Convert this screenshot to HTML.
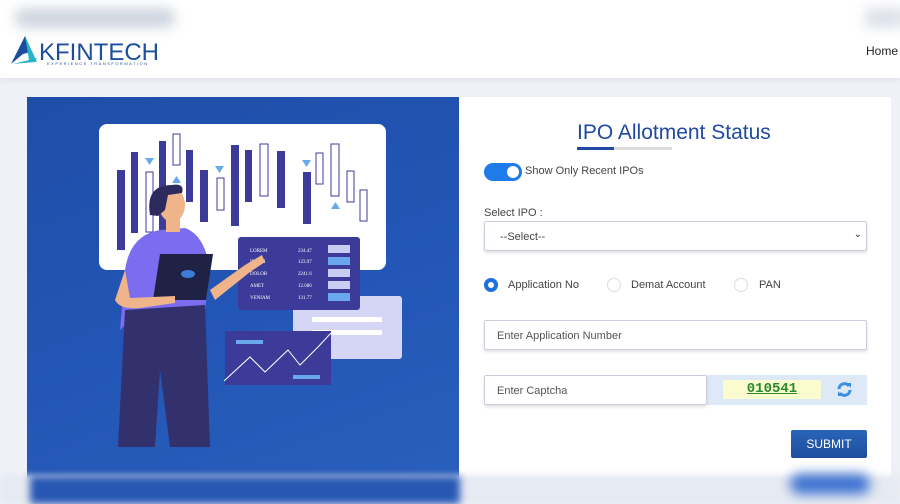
<!DOCTYPE html>
<html><head><meta charset="utf-8"><style>
*{margin:0;padding:0;box-sizing:border-box}
body{width:900px;height:504px;overflow:hidden;background:#eef1f7;font-family:"Liberation Sans",sans-serif;position:relative}
.hdr{position:absolute;left:0;top:0;width:900px;height:78px;background:#fff;box-shadow:0 2px 6px rgba(0,0,0,.06)}
.blur1{position:absolute;left:15px;top:8px;width:160px;height:20px;background:#cfd6e0;filter:blur(6px);border-radius:8px}
.blur2{position:absolute;left:865px;top:8px;width:40px;height:20px;background:#dde2ea;filter:blur(6px)}
.logo{position:absolute;left:11px;top:32px}
.home{position:absolute;right:2px;top:44px;font-size:12px;color:#222}
.left{position:absolute;left:27px;top:97px;width:432px;height:385px;background:linear-gradient(160deg,#1f4ea8 0%,#2255b5 50%,#2a5fbd 100%)}
.right{position:absolute;left:459px;top:97px;width:432px;height:385px;background:#fff}
.title{position:absolute;left:577px;top:121px;font-size:21px;color:#1f4aa0}
.ul1{position:absolute;left:577px;top:147px;width:37px;height:3px;background:#1f4aa0}
.ul2{position:absolute;left:614px;top:147px;width:58px;height:3px;background:#ddd}
.tog{position:absolute;left:484px;top:163px;width:38px;height:18px;border-radius:9px;background:#1e7be8}
.tog:after{content:"";position:absolute;right:3px;top:3px;width:12px;height:12px;border-radius:50%;background:#fff}
.t{position:absolute;font-size:11px;color:#444}
.box{position:absolute;background:#fff;border:1px solid #ccd;box-shadow:0 2px 3px rgba(0,0,0,.12);border-radius:2px}
.radio{position:absolute;width:14px;height:14px;border-radius:50%;border:1px solid #ddd}
.radio.on{border:4px solid #1e6fe0}
.cap{position:absolute;left:707px;top:375px;width:160px;height:30px;background:#dde9f7}
.capt{position:absolute;left:723px;top:380px;width:98px;height:19px;background:#fbfbd0;font-family:"Liberation Mono",monospace;font-weight:bold;color:#2a8a2a;font-size:14px;text-align:center;line-height:19px;text-decoration:underline}
.btn{position:absolute;left:791px;top:430px;width:76px;height:28px;background:linear-gradient(#2a64b8,#1d4e9e);color:#fff;font-size:12px;text-align:center;line-height:28px;border-radius:2px}
.bot{position:absolute;left:0;top:475px;width:900px;height:29px;background:#e6eaf2;filter:blur(3px)}
.botl{position:absolute;left:30px;top:476px;width:430px;height:28px;background:#2757b3;filter:blur(4px)}
.botr{position:absolute;left:790px;top:474px;width:80px;height:20px;background:#3a6fd0;filter:blur(6px);border-radius:10px}
</style></head><body>
<div class="hdr"></div>
<div class="blur1"></div><div class="blur2"></div>
<svg class="logo" width="155" height="34" viewBox="0 0 155 34">
<path d="M0 32 L14 4 L20 20 L12 22 Z" fill="#1d4e9e"/><path d="M14 4 L26 30 L18 28 Z" fill="#27b4c9"/><path d="M2 32 L26 26 L24 30 Z" fill="#27b4c9"/>
<text x="28" y="28" font-family="Liberation Sans" font-size="24" fill="#1d4e9e">KFINTECH</text>
<text x="36" y="33" font-family="Liberation Sans" font-size="4" fill="#1d4e9e" letter-spacing="1.5">EXPERIENCE TRANSFORMATION</text>
</svg>
<div class="home">Home</div>
<div class="left">
<svg width="432" height="385" viewBox="27 97 432 385">
<rect x="99" y="124" width="287" height="146" rx="8" fill="#fff"/>
<g fill="#3c3b9a"><rect x="117" y="170" width="8" height="80"/><rect x="131" y="152" width="7" height="81"/><rect x="159" y="141" width="7" height="100"/><rect x="186" y="150" width="7" height="52"/><rect x="200" y="170" width="8" height="52"/><rect x="231" y="145" width="8" height="81"/><rect x="245" y="150" width="7" height="52"/><rect x="277" y="151" width="8" height="57"/><rect x="303" y="172" width="8" height="52"/></g>
<g fill="none" stroke="#3c3b9a" stroke-width="1"><rect x="173" y="134" width="7" height="31"/><rect x="146" y="172" width="7" height="60"/><rect x="217" y="178" width="7" height="32"/><rect x="260" y="144" width="8" height="52"/><rect x="316" y="153" width="7" height="31"/><rect x="331" y="144" width="8" height="52"/><rect x="347" y="171" width="7" height="31"/><rect x="360" y="190" width="7" height="31"/></g>
<g fill="#6aa8ee"><path d="M145 158h9l-4.5 7z"/><path d="M172 183h9l-4.5-7z"/><path d="M215 166h9l-4.5 7z"/><path d="M302 160h9l-4.5 7z"/><path d="M331 209h9l-4.5-7z"/></g>
<rect x="293" y="296" width="109" height="63" rx="3" fill="#d5d6f6"/>
<g fill="#fff"><rect x="312" y="317" width="70" height="5"/><rect x="312" y="330" width="70" height="5"/></g>
<rect x="238" y="237" width="122" height="73" rx="3" fill="#3c3b9a"/>
<g font-family="Liberation Serif" font-size="5" fill="#fff"><text x="250" y="252">LOREM</text><text x="250" y="263">IPSUM</text><text x="250" y="275">DOLOR</text><text x="250" y="287">AMET</text><text x="250" y="299">VENIAM</text>
<text x="298" y="252">234.47</text><text x="298" y="263">123.97</text><text x="298" y="275">2241.6</text><text x="298" y="287">12.086</text><text x="298" y="299">131.77</text></g>
<g fill="#c9cdf4"><rect x="328" y="245" width="22" height="8"/><rect x="328" y="269" width="22" height="8"/><rect x="328" y="281" width="22" height="8"/></g>
<g fill="#6aa8ee"><rect x="328" y="257" width="22" height="8"/><rect x="328" y="293" width="22" height="8"/></g>
<rect x="225" y="331" width="106" height="54" fill="#3c3b9a"/>
<rect x="236" y="340" width="27" height="4" fill="#6aa8ee"/><rect x="293" y="375" width="27" height="4" fill="#6aa8ee"/>
<polyline points="224,381 250,357 265,372 288,350 300,365 318,347 331,333" fill="none" stroke="#fff" stroke-width="1"/>
<path d="M120 330 L125 270 Q130 235 160 230 L185 228 Q205 235 210 270 L205 310 L140 310 Z" fill="#7b6cf0"/>
<path d="M125 310 L205 305 L210 447 L170 447 L160 370 L155 447 L118 447 Z" fill="#33306e"/>
<path d="M166 206 L180 206 L180 232 L166 232 Z" fill="#f0b48a"/>
<ellipse cx="172" cy="205" rx="13" ry="17" fill="#f0b48a"/>
<path d="M150 215 Q145 185 172 185 Q185 183 182 193 L168 195 L165 210 L158 216 Z" fill="#2d2b5e"/>
<path d="M210 290 L245 265 L262 255 L265 262 L250 272 L215 300 Z" fill="#f0b48a"/>
<path d="M160 254 L213 254 L206 300 L153 300 Z" fill="#1f2244"/>
<ellipse cx="188" cy="274" rx="7" ry="4" fill="#3b7cd8"/>
<path d="M115 300 Q120 310 140 308 L175 303 L175 296 L130 298 L125 270 Z" fill="#f0b48a"/>
</svg>
</div>
<div class="right"></div>
<div class="title">IPO Allotment Status</div>
<div class="ul1"></div><div class="ul2"></div>
<div class="tog"></div>
<div class="t" style="left:525px;top:165px">Show Only Recent IPOs</div>
<div class="t" style="left:484px;top:207px">Select IPO :</div>
<div class="box" style="left:484px;top:221px;width:383px;height:30px"><span class="t" style="left:15px;top:9px">--Select--</span><span class="t" style="right:4px;top:7px;font-size:10px;color:#333">&#8964;</span></div>
<div class="radio on" style="left:484px;top:278px"></div><div class="t" style="left:508px;top:279px">Application No</div>
<div class="radio" style="left:607px;top:278px"></div><div class="t" style="left:631px;top:279px">Demat Account</div>
<div class="radio" style="left:734px;top:278px"></div><div class="t" style="left:759px;top:279px">PAN</div>
<div class="box" style="left:484px;top:320px;width:383px;height:30px"><span class="t" style="left:12px;top:9px;color:#555">Enter Application Number</span></div>
<div class="cap"></div>
<div class="box" style="left:484px;top:375px;width:223px;height:30px"><span class="t" style="left:12px;top:9px;color:#555">Enter Captcha</span></div>
<div class="capt">010541</div>
<svg style="position:absolute;left:836px;top:381px" width="17" height="17" viewBox="0 0 17 17"><path d="M3 8a5.5 5.5 0 0 1 10-3" fill="none" stroke="#3b8fe0" stroke-width="3"/><path d="M14 9a5.5 5.5 0 0 1-10 3" fill="none" stroke="#3b8fe0" stroke-width="3"/><path d="M11 2l4 0 0 5z M6 15l-4 0 0-5z" fill="#3b8fe0"/></svg>
<div class="btn">SUBMIT</div>
<div class="bot"></div><div class="botl"></div><div class="botr"></div>
</body></html>
